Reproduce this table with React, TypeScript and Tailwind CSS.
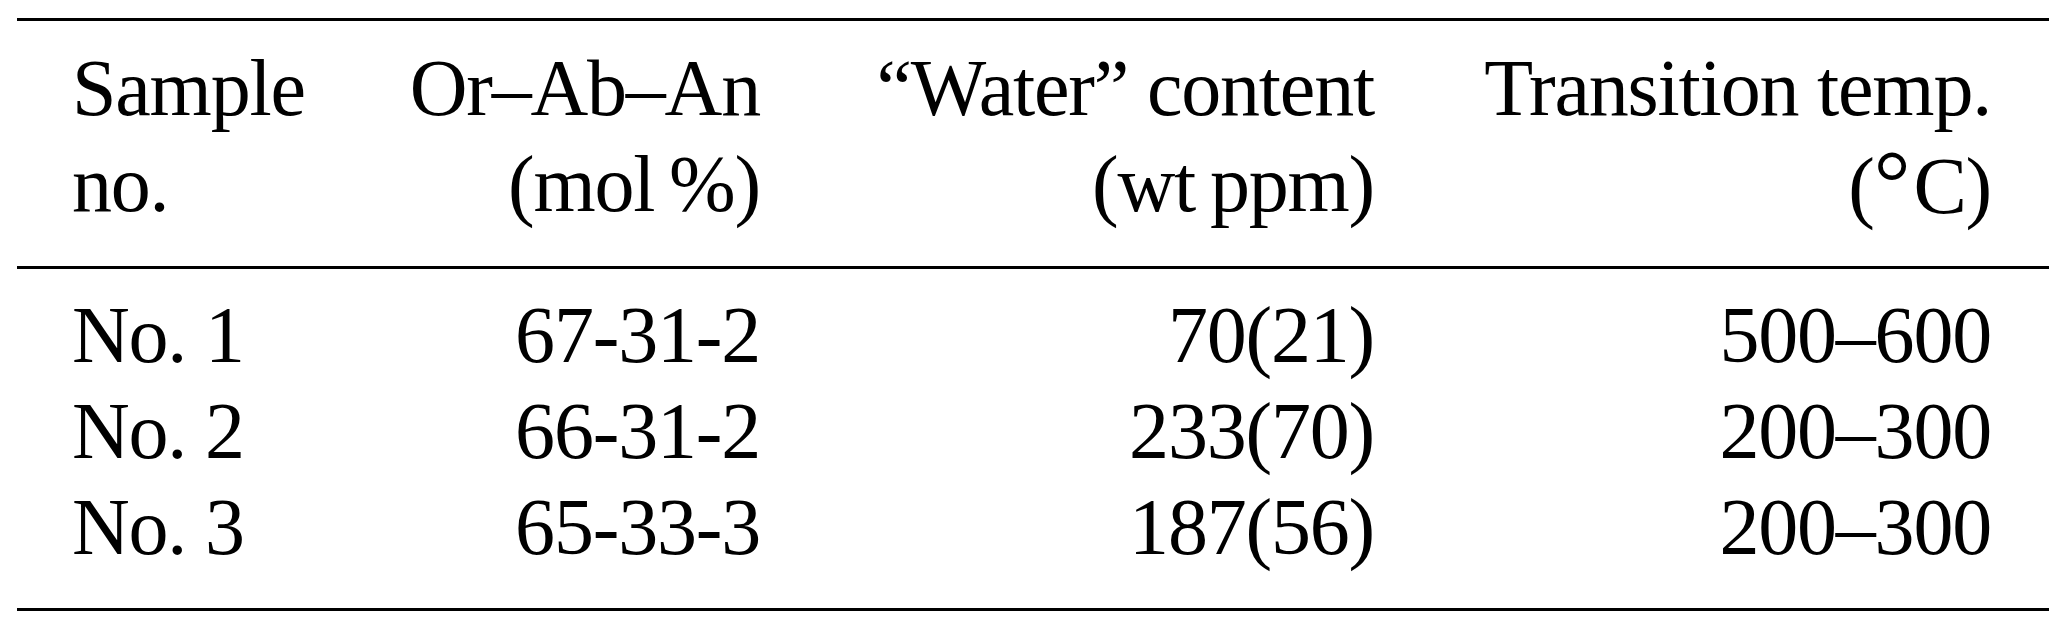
const header = [
  ["Sample", "no."],
  ["Or–Ab–An", "(mol\u2009%)"],
  ["“Water” content", "(wt\u2009ppm)"],
  ["Transition temp.", null],
];

const rows = [
  ["No. 1", "67-31-2", "70(21)", "500–600"],
  ["No. 2", "66-31-2", "233(70)", "200–300"],
  ["No. 3", "65-33-3", "187(56)", "200–300"],
];

const cols = "grid grid-cols-[280px_408px_614px_617px]";

export default function App() {
  return (
    <div className="min-h-screen bg-white pt-[18px] font-['Liberation_Serif',serif] text-[80px] leading-[96px] tracking-[-1.2px] text-black">
      <div className="ml-[17px] w-[2032px] border-y-[3px] border-black">
        {/* header */}
        <div className={`${cols} border-b-[3px] border-black pl-[55px] pt-[19px] pb-[32px]`}>
          {header.map((h, i) => (
            <div key={i} className={i === 0 ? "text-left" : "text-right"}>
              <div className="whitespace-nowrap">{h[0]}</div>
              <div className="whitespace-nowrap">
                {h[1] ?? (
                  <>
                    (<span className="text-[92px] leading-none">°</span>
                    <span className="ml-[4px]">C)</span>
                  </>
                )}
              </div>
            </div>
          ))}
        </div>
        {/* body */}
        <div className="pl-[55px] pt-[18px] pb-[33px]">
          {rows.map((r) => (
            <div key={r[0]} className={cols}>
              {r.map((c, i) => (
                <div key={i} className={`whitespace-nowrap ${i === 0 ? "text-left" : "text-right"}`}>
                  {c}
                </div>
              ))}
            </div>
          ))}
        </div>
      </div>
    </div>
  );
}
